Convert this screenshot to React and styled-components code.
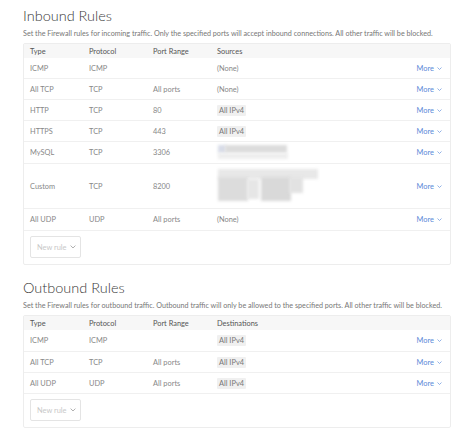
import React from "react";
import styled, { createGlobalStyle } from "styled-components";

const Global = createGlobalStyle`
  html, body { margin: 0; padding: 0; background: #fff; }
  body { font-family: Lato, "Open Sans", "Liberation Sans", sans-serif; color: #555; }
`;

const Page = styled.div`
  padding: 6px 23px 0 23px;
  width: 428px;
`;

const Section = styled.section`
  margin-bottom: ${(p) => p.$mb || 0}px;
`;

const Title = styled.h2`
  margin: 0;
  font-size: 14.5px;
  font-weight: 300;
  color: #3a3a3a;
  line-height: 19px;
`;

const Desc = styled.p`
  margin: 4px 0 4px 0;
  font-size: 7.2px;
  line-height: 10px;
  color: #777;
  white-space: nowrap;
`;

const Table = styled.div`
  border: 1px solid #ededed;
  border-radius: 2px;
`;

const Grid = styled.div`
  display: grid;
  grid-template-columns: 59px 64px 64px 1fr auto;
  align-items: center;
  padding: 0 8px 0 6px;
  font-size: 7.4px;
  box-sizing: border-box;
`;

const HeadRow = styled(Grid)`
  height: 14px;
  background: #f7f7f7;
  color: #555;
`;

const Row = styled(Grid)`
  height: ${(p) => p.$h || 21}px;
  border-bottom: 1px solid #f0f0f0;
  color: #888;
`;

const Chip = styled.span`
  display: inline-block;
  background: #f0f0f0;
  padding: 1px 2px;
  border-radius: 1px;
  color: #777;
`;

const More = styled.span`
  color: #5a8ad8;
  display: flex;
  align-items: center;
  gap: 3px;
`;

const Footer = styled.div`
  padding: 5px 6px 6px 6px;
`;

const NewRule = styled.div`
  width: 51px;
  height: 22px;
  border: 1px solid #e4e4e4;
  border-radius: 2px;
  box-sizing: border-box;
  display: flex;
  align-items: center;
  padding-left: 6px;
  gap: 4px;
  font-size: 7.4px;
  color: #c8c8c8;
`;

const BlurWrap = styled.div`
  position: relative;
  height: ${(p) => p.$h}px;
  width: ${(p) => p.$w}px;
`;

const Blob = styled.div`
  position: absolute;
  background: ${(p) => p.$c || "#dcdcdc"};
  filter: blur(1.5px);
`;

const Chevron = ({ color = "#5a8ad8", size = 5 }) => (
  <svg width={size} height={size * 0.6} viewBox="0 0 10 6">
    <path d="M1 1l4 4 4-4" fill="none" stroke={color} strokeWidth="1.3" />
  </svg>
);

const MoreCell = () => (
  <More>
    More <Chevron />
  </More>
);

const MySQLBlur = () => (
  <BlurWrap $h={15} $w={80}>
    <Blob style={{ left: 1, top: 0, width: 8, height: 8 }} $c="#d8dce8" />
    <Blob style={{ left: 8, top: 0, width: 62, height: 8 }} $c="#dcdcdc" />
    <Blob style={{ left: 1, top: 8, width: 70, height: 6 }} $c="#eeeeee" />
  </BlurWrap>
);

const CustomBlur = () => (
  <BlurWrap $h={34} $w={104}>
    <Blob style={{ left: 1, top: 0, width: 100, height: 10 }} $c="#e8e8e8" />
    <Blob style={{ left: 1, top: 8, width: 30, height: 24 }} $c="#dcdcdc" />
    <Blob style={{ left: 30, top: 10, width: 12, height: 20 }} $c="#e6e6e6" />
    <Blob style={{ left: 44, top: 8, width: 30, height: 24 }} $c="#d9d9d9" />
    <Blob style={{ left: 72, top: 8, width: 14, height: 16 }} $c="#e2e2e2" />
  </BlurWrap>
);

const none = "(None)";
const ipv4 = <Chip>All IPv4</Chip>;

const inbound = [
  ["ICMP", "ICMP", "", none],
  ["All TCP", "TCP", "All ports", none],
  ["HTTP", "TCP", "80", ipv4],
  ["HTTPS", "TCP", "443", ipv4],
  ["MySQL", "TCP", "3306", <MySQLBlur />, 22],
  ["Custom", "TCP", "8200", <CustomBlur />, 45],
  ["All UDP", "UDP", "All ports", none, 22],
];

const outbound = [
  ["ICMP", "ICMP", "", ipv4, 22],
  ["All TCP", "TCP", "All ports", ipv4],
  ["All UDP", "UDP", "All ports", ipv4],
];

const RulesTable = ({ last, rows }) => (
  <Table>
    <HeadRow>
      <span>Type</span>
      <span>Protocol</span>
      <span>Port Range</span>
      <span>{last}</span>
      <span />
    </HeadRow>
    {rows.map(([t, p, r, s, h], i) => (
      <Row key={i} $h={h}>
        <span>{t}</span>
        <span>{p}</span>
        <span>{r}</span>
        <span>{s}</span>
        <MoreCell />
      </Row>
    ))}
    <Footer>
      <NewRule>
        New rule <Chevron color="#999" size={6} />
      </NewRule>
    </Footer>
  </Table>
);

export default function App() {
  return (
    <>
      <Global />
      <Page>
        <Section $mb={13}>
          <Title>Inbound Rules</Title>
          <Desc>
            Set the Firewall rules for incoming traffic. Only the specified ports will accept inbound connections. All other traffic will be blocked.
          </Desc>
          <RulesTable last="Sources" rows={inbound} />
        </Section>
        <Section>
          <Title>Outbound Rules</Title>
          <Desc>
            Set the Firewall rules for outbound traffic. Outbound traffic will only be allowed to the specified ports. All other traffic will be blocked.
          </Desc>
          <RulesTable last="Destinations" rows={outbound} />
        </Section>
      </Page>
    </>
  );
}
